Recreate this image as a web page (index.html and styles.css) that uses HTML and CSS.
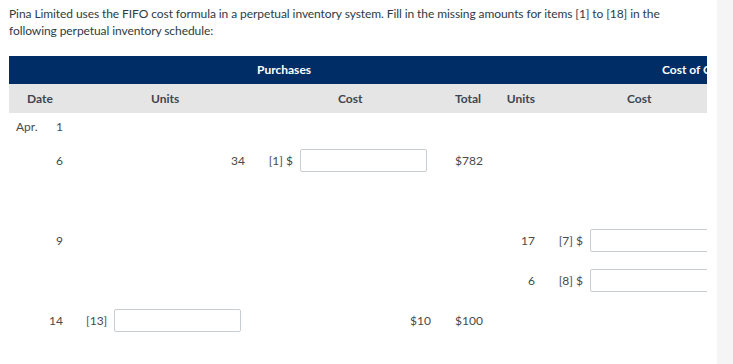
FILE: index.html
```html
<!DOCTYPE html>
<html>
<head>
<meta charset="utf-8">
<link rel="stylesheet" href="styles.css">
</head>
<body>
<div class="page">
  <main class="main">
    <p class="intro">Pina Limited uses the FIFO cost formula in a perpetual inventory system. Fill in the missing amounts for items [1] to [18] in the following perpetual inventory schedule:</p>
    <div class="scroller">
      <div class="sched">
        <div class="row band">
          <div class="c-purch">Purchases</div>
          <div class="c-cogs">Cost of Goods Sold</div>
        </div>
        <div class="row subhead">
          <div class="h-date">Date</div>
          <div class="h-units">Units</div>
          <div class="h-cost">Cost</div>
          <div class="h-total">Total</div>
          <div class="h-units2">Units</div>
          <div class="h-cost2">Cost</div>
        </div>
        <div class="row first">
          <div class="mon">Apr.</div>
          <div class="day">1</div>
        </div>
        <div class="row">
          <div class="mon"></div>
          <div class="day">6</div>
          <div class="pu num">34</div>
          <div class="pc field"><span class="lbl">[1] $</span><input class="box" type="text"></div>
          <div class="pt">$782</div>
        </div>
        <div class="row"></div>
        <div class="row">
          <div class="mon"></div>
          <div class="day">9</div>
          <div class="pu"></div>
          <div class="pc"></div>
          <div class="pt"></div>
          <div class="cu num">17</div>
          <div class="cc field"><span class="lbl">[7] $</span><input class="box" type="text"></div>
        </div>
        <div class="row">
          <div class="mon"></div>
          <div class="day"></div>
          <div class="pu"></div>
          <div class="pc"></div>
          <div class="pt"></div>
          <div class="cu num">6</div>
          <div class="cc field"><span class="lbl">[8] $</span><input class="box" type="text"></div>
        </div>
        <div class="row">
          <div class="mon"></div>
          <div class="day">14</div>
          <div class="pu field13"><span class="lbl">[13]</span><input class="box" type="text"></div>
          <div class="pc num">$10</div>
          <div class="pt">$100</div>
        </div>
      </div>
    </div>
  </main>
  <aside class="gutter"></aside>
</div>
</body>
</html>
```
FILE: styles.css
```css
html, body {
  margin: 0;
  padding: 0;
  background: #ffffff;
}
body {
  font-family: Lato, "Noto Sans", sans-serif;
  font-size: 12px;
  color: #2d3b45;
}
.page {
  display: flex;
  width: 733px;
  height: 364px;
  overflow: hidden;
}
.main {
  width: 708px;
  padding: 5px 0 0 9px;
  flex: none;
}
.gutter {
  flex: 1;
  background: #f5f5f5;
}
.intro {
  margin: 0;
  font-size: 12px;
  line-height: 17px;
  width: 665px;
  letter-spacing: -0.08px;
}
.scroller {
  margin-top: 17px;
  width: 698px;
  overflow: hidden;
}
.sched {
  width: 900px;
}
.row {
  display: grid;
  grid-template-columns: 35px 22px 184px 186px 54px 55px 255px 109px;
  height: 40px;
  align-items: center;
  color: #4a4a4a;
}
.band {
  height: 28px;
  background: #002d66;
  color: #ffffff;
  font-weight: 700;
  font-size: 12px;
}
.c-purch {
  grid-column: 3 / 6;
  padding-left: 191px;
  padding-bottom: 1px;
}
.c-cogs {
  grid-column: 7 / 9;
  padding-left: 117px;
  white-space: nowrap;
  padding-bottom: 1px;
}
.subhead {
  height: 29px;
  background: #e5e5e5;
  color: #3d4650;
  font-weight: 700;
}
.h-date { grid-column: 1 / 3; padding-left: 18px; }
.h-units { grid-column: 3; padding-left: 85px; }
.h-cost { grid-column: 4; padding-left: 88px; }
.h-total { grid-column: 5; padding-left: 19px; }
.h-units2 { grid-column: 6; text-align: right; padding-right: 10px; }
.h-cost2 { grid-column: 7; padding-left: 82px; }
.first { height: 27px; }
.mon { padding-left: 7px; }
.day { text-align: right; padding-right: 3px; }
.num { text-align: right; padding-right: 5px; }
.cu.num { padding-right: 10px; }
.pt { padding-left: 19px; }
.field {
  display: flex;
  align-items: center;
  justify-content: flex-end;
  gap: 7px;
}
.pc.field { padding-right: 9px; }
.cc.field { justify-content: flex-start; padding-left: 11px; }
.cc.field .lbl { width: 27px; text-align: right; }
.field13 {
  display: flex;
  align-items: center;
  gap: 7px;
  padding-left: 20px;
}
.box {
  width: 127px;
  height: 23px;
  box-sizing: border-box;
  border: 1px solid #c7cdd1;
  border-radius: 2px;
  margin: 0;
  padding: 0 4px;
  font: inherit;
  background: #fff;
}
```
